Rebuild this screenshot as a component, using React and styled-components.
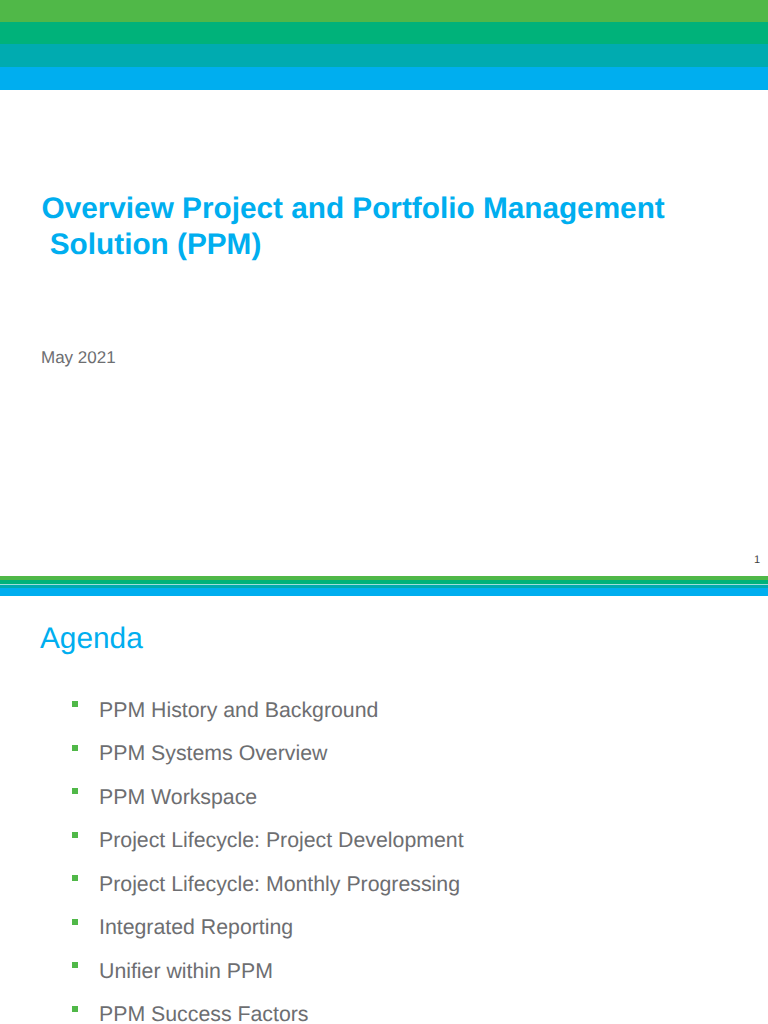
import { createGlobalStyle, styled } from "styled-components";

const GlobalStyle = createGlobalStyle`
  html, body {
    margin: 0;
    padding: 0;
    background: #ffffff;
    overflow: hidden;
  }
  body {
    font-family: "Liberation Sans", Arial, sans-serif;
    text-rendering: geometricPrecision;
  }
`;

const Viewer = styled.div`
  width: 768px;
  height: 1024px;
  overflow: hidden;
`;

const Slide = styled.section`
  height: ${(p) => p.$height}px;
  display: flex;
  flex-direction: column;
`;

const Band = styled.div`
  flex: none;
  height: ${(p) => p.$height}px;
  background: ${(p) => p.$color};
`;

const TitleBody = styled.div`
  flex: 1;
  display: flex;
  flex-direction: column;
  padding: 101px 8px 0 41.5px;
`;

const Title = styled.h1`
  margin: 0;
  font-size: 29.75px;
  line-height: 35.6px;
  font-weight: 700;
  color: #00aeef;
  white-space: pre;
`;

const DateLine = styled.div`
  margin-top: 85.5px;
  margin-left: -0.5px;
  font-size: 17px;
  line-height: 20px;
  color: #6d6e71;
`;

const PageNumber = styled.div`
  margin-top: auto;
  padding-bottom: 9px;
  align-self: flex-end;
  font-size: 11px;
  line-height: 13px;
  color: #404040;
`;

const Thin = styled.div`
  flex: none;
  height: 1px;
  background: #9fdcd8;
`;

const AgendaBody = styled.div`
  padding: 25px 0 0 40px;
`;

const Heading = styled.h2`
  margin: 0;
  font-size: 29.8px;
  line-height: 36px;
  font-weight: 400;
  color: #00aeef;
`;

const List = styled.ul`
  list-style: none;
  margin: 43.5px 0 0;
  padding: 0 0 0 31.5px;
  display: flex;
  flex-direction: column;
  gap: 25.57px;
`;

const Item = styled.li`
  display: flex;
  font-size: 21.3px;
  line-height: 18px;
  color: #6d6e71;
`;

const Bullet = styled.span`
  width: 6px;
  height: 6px;
  margin-top: 0.5px;
  margin-right: 21.5px;
  flex: none;
  background: #50b848;
`;

const agenda = [
  "PPM History and Background",
  "PPM Systems Overview",
  "PPM Workspace",
  "Project Lifecycle: Project Development",
  "Project Lifecycle: Monthly Progressing",
  "Integrated Reporting",
  "Unifier within PPM",
  "PPM Success Factors",
];

const App = () => {
  return (
    <Viewer>
      <GlobalStyle />
      <Slide $height={576}>
        <Band $height={22} $color="#50b848" />
        <Band $height={22} $color="#00b27a" />
        <Band $height={23} $color="#00abb0" />
        <Band $height={23} $color="#00aeef" />
        <TitleBody>
          <Title>{"Overview Project and Portfolio Management\n Solution (PPM)"}</Title>
          <DateLine>May 2021</DateLine>
          <PageNumber>1</PageNumber>
        </TitleBody>
      </Slide>
      <Slide $height={448}>
        <Band $height={4} $color="#50b848" />
        <Band $height={4} $color="#00b27a" />
        <Thin />
        <Band $height={3} $color="#00abb0" />
        <Band $height={8} $color="#00aeef" />
        <AgendaBody>
          <Heading>Agenda</Heading>
          <List>
            {agenda.map((text) => (
              <Item key={text}>
                <Bullet />
                {text}
              </Item>
            ))}
          </List>
        </AgendaBody>
      </Slide>
    </Viewer>
  );
};

export default App;
